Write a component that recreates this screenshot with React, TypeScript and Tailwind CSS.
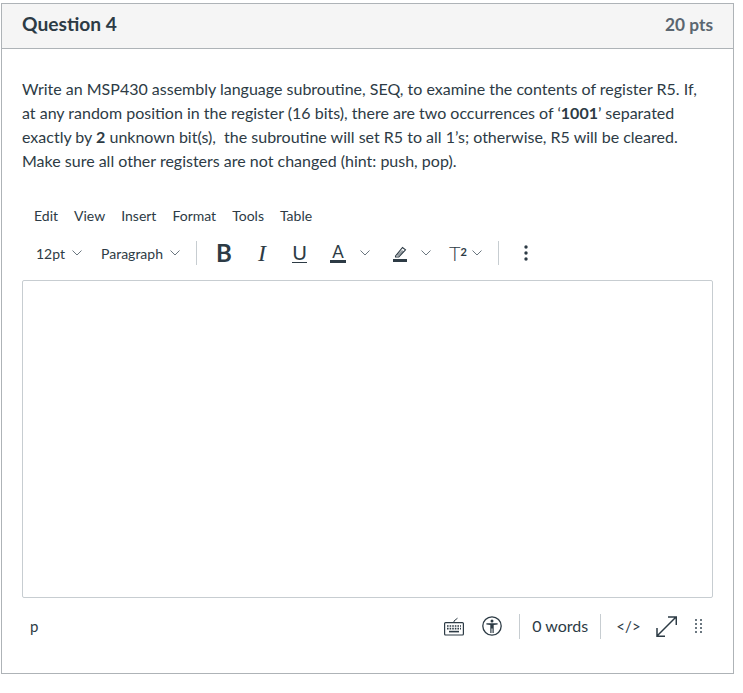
const menus = ['Edit', 'View', 'Insert', 'Format', 'Tools', 'Table'];

function Chevron({ className = '' }: { className?: string }) {
  return (
    <svg width="10" height="6" viewBox="0 0 10 6" fill="none" stroke="#6b7780" strokeWidth="1" className={className}>
      <path d="M0.5 0.5 5 5 9.5 0.5" />
    </svg>
  );
}

function KeyboardIcon() {
  return (
    <svg width="20" height="19" viewBox="0 0 20 19" fill="none" stroke="#2d3b45">
      <path d="M10 5.5V4L13.5 1.2" strokeWidth="1" />
      <rect x="0.6" y="5.6" width="18.8" height="12.4" rx="1" strokeWidth="1.2" />
      <path d="M3 9h14M3 11.6h14" strokeWidth="1.6" strokeDasharray="1.6 1" />
      <path d="M5 14.6h10" strokeWidth="1.6" />
    </svg>
  );
}

function AccessibilityIcon() {
  return (
    <svg width="20" height="20" viewBox="0 0 20 20" fill="none">
      <circle cx="10" cy="10" r="9.2" stroke="#2d3b45" strokeWidth="1.3" />
      <circle cx="10" cy="4.9" r="1.5" fill="#2d3b45" />
      <path d="M4.4 7.2h11.2v1.2l-3.9.6v8h-1.2v-4.4h-1v4.4H8.3V9L4.4 8.4z" fill="#2d3b45" />
    </svg>
  );
}

function ExpandIcon() {
  return (
    <svg width="21" height="21" viewBox="0 0 21 21" fill="none" stroke="#2d3b45" strokeWidth="1.5">
      <path d="M1 20 20 1M12 1H20.3V9M1 12V20.3H9" />
    </svg>
  );
}

function GripIcon() {
  return (
    <svg width="9" height="17" viewBox="0 0 9 17" fill="#6b7780">
      {[1, 5, 9, 13].flatMap((y) =>
        [1, 6].map((x) => <rect key={`${x}-${y}`} x={x} y={y} width="2" height="2" />),
      )}
    </svg>
  );
}

function HighlightIcon() {
  return (
    <svg width="16" height="17" viewBox="0 0 16 17" fill="none">
      <path d="M3.5 11 10.5 2.5l3 2.3-6.7 7.2H3.5z" stroke="#2d3b45" strokeWidth="1.1" />
      <path d="M4.5 10 10 5l2 1.4-5.5 5z" fill="#2d3b45" opacity="0.5" />
      <rect x="1" y="14" width="14" height="3" fill="#2d3b45" />
    </svg>
  );
}

function DotsIcon() {
  return (
    <svg width="4" height="16" viewBox="0 0 4 16" fill="#2d3b45">
      <circle cx="2" cy="2" r="1.7" />
      <circle cx="2" cy="8" r="1.7" />
      <circle cx="2" cy="14" r="1.7" />
    </svg>
  );
}

export default function App() {
  return (
    <div className="min-h-[693px] bg-white pt-[3px] pl-px font-['Lato','Noto_Sans',sans-serif] text-[#2d3b45]">
      <div className="flex h-[671px] w-[733px] flex-col border border-[#aeb3b7]">
        <div className="flex h-[45px] shrink-0 items-center justify-between border-b border-[#aeb3b7] bg-[#f5f5f5] px-5 pb-[3px]">
          <h2 className="text-[19.2px] font-bold text-[#2d3b45]">Question 4</h2>
          <span className="text-[17.3px] font-bold text-[#5b6670]">20 pts</span>
        </div>

        <div className="flex-1 px-5 pt-[28px]">
          <p className="text-[16px] leading-6">
            Write an MSP430 assembly language subroutine, SEQ, to examine the contents of register R5. If,
            <br />
            at any random position in the register (16 bits), there are two occurrences of ‘<b>1001</b>’ separated
            <br />
            exactly by <b>2</b> unknown bit(s),&nbsp; the subroutine will set R5 to all 1’s; otherwise, R5 will be cleared.
            <br />
            Make sure all other registers are not changed (hint: push, pop).
          </p>

          <div className="mt-[33px] flex gap-4 pl-3 text-[14px] leading-5">
            {menus.map((m) => (
              <span key={m}>{m}</span>
            ))}
          </div>

          <div className="mt-[14px] flex h-[26px] items-center pl-[14px] text-[14px]">
            <span>12pt</span>
            <Chevron className="ml-[7px]" />
            <span className="ml-[19px]">Paragraph</span>
            <Chevron className="ml-[7px]" />
            <div className="ml-[16px] h-[24px] w-px bg-[#c7cdd1]" />
            <span className="ml-[19px] w-[16px] text-center text-[24px] font-bold leading-none">B</span>
            <span className="ml-[24px] w-[12px] text-center font-['Liberation_Serif',serif] text-[24px] italic leading-none">I</span>
            <span className="ml-[24px] w-[15px] border-b border-[#2d3b45] text-center text-[20px] font-normal leading-[19px]">U</span>
            <span className="ml-[23px] w-[16px] border-b-[3px] border-[#2d3b45] text-center text-[17px] font-normal leading-[17px]">A</span>
            <Chevron className="ml-[14px]" />
            <span className="ml-[22px]"><HighlightIcon /></span>
            <Chevron className="ml-[13px]" />
            <span className="ml-[18px] w-[18px] whitespace-nowrap text-[20px] font-light leading-none">T<sup className="text-[11px] font-bold">2</sup></span>
            <Chevron className="ml-[5px]" />
            <div className="ml-[16px] h-[24px] w-px bg-[#c7cdd1]" />
            <span className="ml-[25px]"><DotsIcon /></span>
          </div>

          <div className="mt-[14px] h-[318px] rounded-[2px] border border-[#c7cdd1] bg-white" />

          <div className="mt-[12px] flex h-[32px] items-center pl-2 text-[16px]">
            <span className="text-[15px]">p</span>
            <div className="ml-auto flex items-center">
              <KeyboardIcon />
              <span className="ml-[18px]"><AccessibilityIcon /></span>
              <div className="ml-[17px] h-[25px] w-px bg-[#c7cdd1]" />
              <span className="ml-[12px]">0 words</span>
              <div className="ml-[12px] h-[25px] w-px bg-[#c7cdd1]" />
              <span className="ml-[15px] text-[15px] tracking-[0.2px]">&lt;/&gt;</span>
              <span className="ml-[15px]"><ExpandIcon /></span>
              <span className="ml-[17px] mr-[10px]"><GripIcon /></span>
            </div>
          </div>
        </div>
      </div>
    </div>
  );
}
